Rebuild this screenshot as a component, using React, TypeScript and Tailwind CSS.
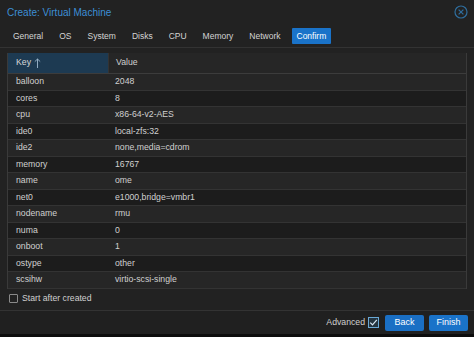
import React from "react";

const rows: [string, string][] = [
  ["balloon", "2048"],
  ["cores", "8"],
  ["cpu", "x86-64-v2-AES"],
  ["ide0", "local-zfs:32"],
  ["ide2", "none,media=cdrom"],
  ["memory", "16767"],
  ["name", "ome"],
  ["net0", "e1000,bridge=vmbr1"],
  ["nodename", "rmu"],
  ["numa", "0"],
  ["onboot", "1"],
  ["ostype", "other"],
  ["scsihw", "virtio-scsi-single"],
];

const tabs = ["General", "OS", "System", "Disks", "CPU", "Memory", "Network", "Confirm"];

export default function App() {
  return (
    <div
      className="w-[474px] h-[337px] bg-[#222222] text-[#d0d0d0] flex flex-col overflow-hidden"
      style={{ fontFamily: '"Liberation Sans", Arial, sans-serif' }}
    >
      <div className="h-[24px] flex items-center justify-between pl-[7px] pr-[6px]">
        <span className="text-[10px] text-[#3d8fd6]">Create: Virtual Machine</span>
        <svg width="14" height="14" viewBox="0 0 14 14">
          <circle cx="7" cy="7" r="6" fill="none" stroke="#2f6e9e" strokeWidth="1.2" />
          <path d="M4.6 4.6 L9.4 9.4 M9.4 4.6 L4.6 9.4" stroke="#2f6e9e" strokeWidth="1.2" />
        </svg>
      </div>

      <div className="h-[24px] flex items-start pt-[4px] pl-[5px] border-b border-[#333333]">
        {tabs.map((t) =>
          t === "Confirm" ? (
            <div
              key={t}
              className="h-[16px] px-[5px] ml-[3px] flex items-center bg-[#1a73c9] text-white text-[8.5px] rounded-[1px]"
            >
              {t}
            </div>
          ) : (
            <div key={t} className="h-[16px] px-[8px] flex items-center text-[8.5px] text-[#d4d4d4]">
              {t}
            </div>
          )
        )}
      </div>

      <div className="flex-1 flex flex-col pl-[3px] pr-[2px] pt-[5px]">
        <div className="flex">
          <div className="w-[460px] border-l border-r border-[#3a3a3a] ml-[4px] flex flex-col">
            <div className="h-[21px] flex border-b border-[#3c3c3c] bg-[#262626] text-[8.7px]">
              <div className="w-[100px] bg-[#1d3a52] flex items-center pl-[8px] gap-[3px] text-[#d8d8d8]">
                Key
                <svg width="7" height="10" viewBox="0 0 7 10">
                  <path d="M3.5 1 V10 M0.8 3.6 L3.5 1 L6.2 3.6" fill="none" stroke="#9fb9cf" strokeWidth="0.9" />
                </svg>
              </div>
              <div className="flex items-center pl-[7px] border-l border-[#333333]">Value</div>
            </div>
            {rows.map(([k, v], i) => (
              <div
                key={k}
                className={`h-[16.5px] flex items-center border-b border-[#333333] text-[8.7px] ${
                  i % 2 === 0 ? "bg-[#262626]" : "bg-[#1c1c1c]"
                }`}
              >
                <div className="w-[100px] pl-[8px]">{k}</div>
                <div className="pl-[7px]">{v}</div>
              </div>
            ))}
          </div>
        </div>
        <div className="h-[18px] mt-[1px] flex items-center gap-[4px] pl-[6px]">
          <div className="w-[9px] h-[9px] border border-[#8a8a8a] rounded-[1px]" />
          <span className="text-[8.7px] text-[#d0d0d0]">Start after created</span>
        </div>
      </div>

      <div className="h-[24px] border-t border-[#333333] bg-[#202020] flex items-center justify-end pr-[6px] gap-[5px]">
        <div className="flex items-center gap-[3px] mr-[1px]">
          <span className="text-[8.7px] text-[#d0d0d0]">Advanced</span>
          <svg width="11" height="11" viewBox="0 0 11 11">
            <rect x="0.5" y="0.5" width="10" height="10" fill="#24343f" stroke="#6aa9d6" strokeWidth="1" />
            <path d="M2.3 5.6 L4.5 7.8 L8.8 2.8" fill="none" stroke="#d8e8f4" strokeWidth="1.2" />
          </svg>
        </div>
        <div className="w-[39px] h-[16px] bg-[#1a6fc4] rounded-[2px] flex items-center justify-center text-[9px] text-white">
          Back
        </div>
        <div className="w-[39px] h-[16px] bg-[#1a73c9] rounded-[2px] flex items-center justify-center text-[9px] text-white">
          Finish
        </div>
      </div>
      <div className="h-[3px] bg-[#0c0c0c]" />
    </div>
  );
}
